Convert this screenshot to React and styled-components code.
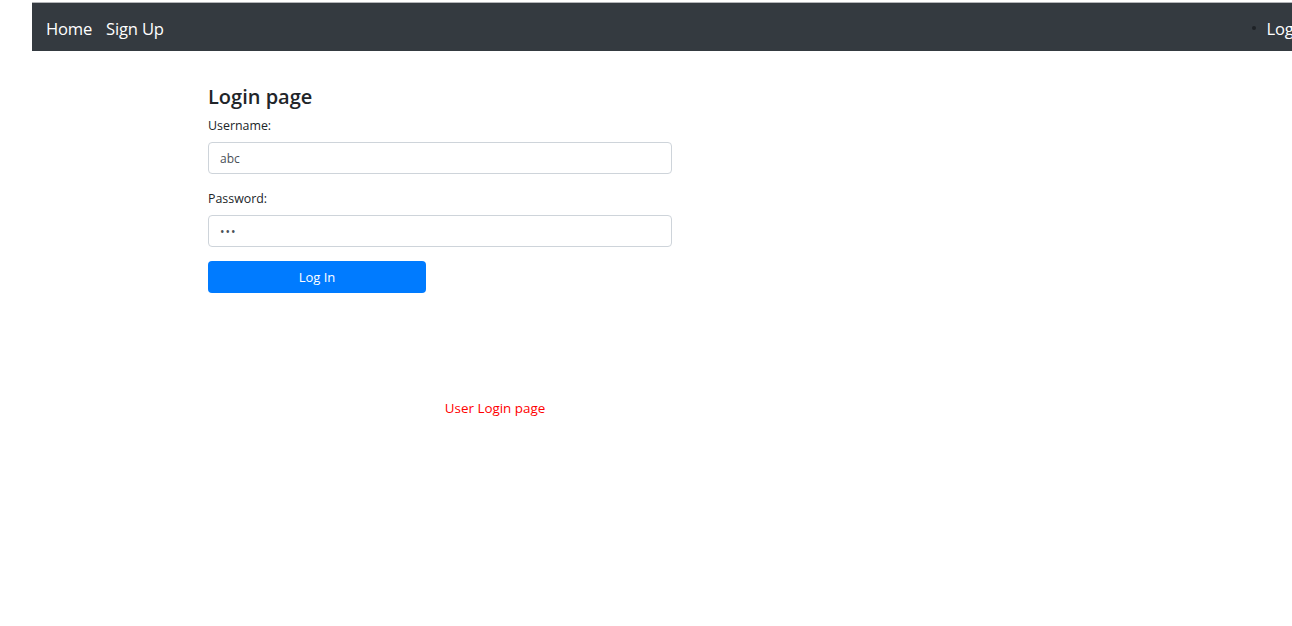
import React from "react";
import styled, { createGlobalStyle } from "styled-components";

const GlobalStyle = createGlobalStyle`
  html, body {
    margin: 0;
    padding: 0;
    background: #fff;
    overflow: hidden;
  }
  body {
    font-family: "Open Sans", "Noto Sans", sans-serif;
    color: #212529;
  }
`;

const Page = styled.div`
  width: 1292px;
  height: 626px;
  padding-top: 2px;
  box-sizing: border-box;
  overflow: hidden;
`;

const NavBar = styled.nav`
  display: flex;
  align-items: center;
  justify-content: space-between;
  margin-left: 32px;
  width: 1320px;
  height: 49px;
  padding: 0 33px 0 14px;
  box-sizing: border-box;
  background: #343a40;
  border-top: 1px solid #b4b6b9;
`;

const NavLinks = styled.div`
  display: flex;
  gap: 14px;
  padding-top: 2px;
`;

const NavLink = styled.a`
  color: #fff;
  font-size: 16.6px;
  text-decoration: none;
  letter-spacing: -0.2px;
`;

const NavRight = styled.ul`
  margin: 0;
  padding: 0;
  display: flex;
  align-items: center;
  list-style: none;
  padding-top: 2px;
`;

const NavItem = styled.li`
  display: flex;
  align-items: center;
  gap: 10px;
  color: #fff;
  font-size: 16.6px;
  letter-spacing: -0.2px;
  white-space: nowrap;

  &::before {
    content: "";
    width: 4px;
    height: 4px;
    border-radius: 50%;
    background: #1e2226;
  }
`;

const Main = styled.main`
  padding: 33px 0 0 208px;
`;

const Form = styled.form`
  width: 464px;
  display: flex;
  flex-direction: column;
`;

const Title = styled.h2`
  margin: 0 0 7px;
  font-size: 20px;
  font-weight: 600;
  line-height: 26px;
  color: #212529;
`;

const Label = styled.label`
  font-size: 12.4px;
  line-height: 17px;
  color: #212529;
  margin-bottom: 8px;
`;

const Input = styled.input`
  height: 32px;
  padding: 0 11px;
  box-sizing: border-box;
  border: 1px solid #ced4da;
  border-radius: 4px;
  font-family: inherit;
  font-size: 12px;
  color: #495057;
  margin-bottom: 16px;
  outline: none;

  &[type="password"] {
    letter-spacing: 1px;
  }
`;

const Button = styled.button`
  width: 218px;
  height: 32px;
  margin-top: -2px;
  border: none;
  border-radius: 4px;
  background: #007bff;
  color: #fff;
  font-family: inherit;
  font-size: 13px;
  cursor: pointer;
`;

const Footer = styled.footer`
  width: 926px;
  margin-left: 32px;
  margin-top: 106px;
  text-align: center;
  font-size: 13.4px;
  color: #ff0000;
`;

export default function App() {
  return (
    <>
      <GlobalStyle />
      <Page>
        <NavBar>
          <NavLinks>
            <NavLink href="#">Home</NavLink>
            <NavLink href="#">Sign Up</NavLink>
          </NavLinks>
          <NavRight>
            <NavItem>Logout</NavItem>
          </NavRight>
        </NavBar>
        <Main>
          <Form onSubmit={e => e.preventDefault()}>
            <Title>Login page</Title>
            <Label>Username:</Label>
            <Input type="text" defaultValue="abc" />
            <Label>Password:</Label>
            <Input type="password" defaultValue="abc" />
            <Button type="submit">Log In</Button>
          </Form>
        </Main>
        <Footer>User Login page</Footer>
      </Page>
    </>
  );
}
